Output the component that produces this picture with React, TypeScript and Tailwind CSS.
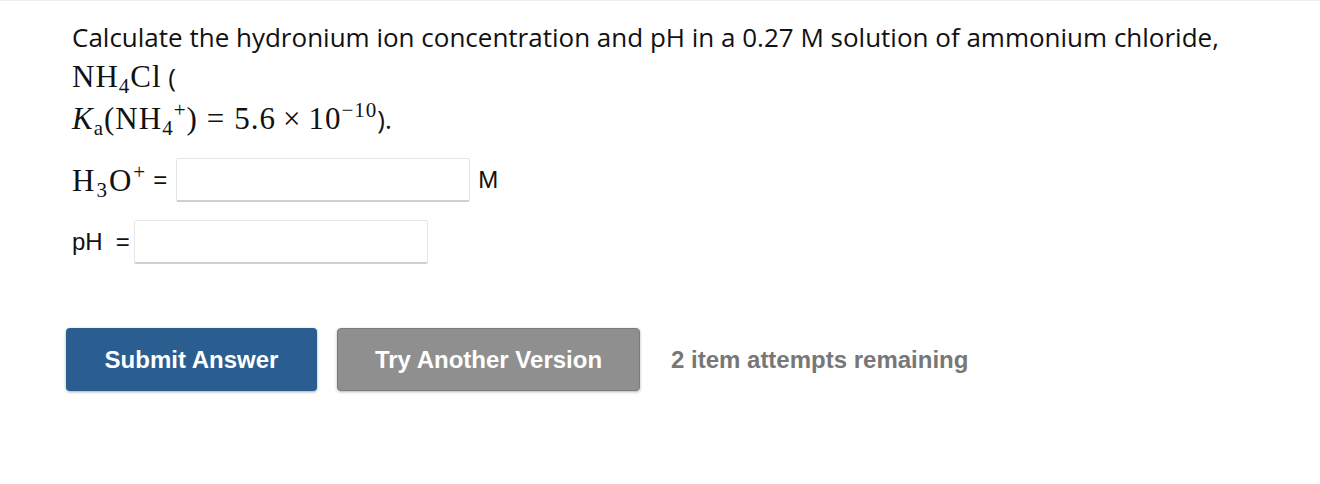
const sans = "font-['Open_Sans',sans-serif]";
const math = "font-['Liberation_Serif',serif] text-[31px] leading-none tracking-[1px]";
const arial = "font-['Liberation_Sans',Arial,sans-serif]";

const Sub = ({ children }: { children: React.ReactNode }) => (
  <span className="relative top-[6px] text-[21px] leading-none">{children}</span>
);

const Sup = ({ children }: { children: React.ReactNode }) => (
  <span className="relative -top-[12px] text-[21px] leading-none">{children}</span>
);

const AnswerInput = () => (
  <input
    type="text"
    className="h-[44px] w-[294px] rounded-[2px] border border-[#e6e6e6] border-b-2 border-b-[#cfcfcf] bg-white px-2 text-[20px] outline-none"
  />
);

export default function App() {
  return (
    <div className="min-h-[484px] w-full border-t border-[#ececec] bg-white pl-[72px] pt-[16px] text-[#111]">
      <div className={`${sans} h-[40px] text-[26px] leading-[40px]`}>
        Calculate the hydronium ion concentration and pH in a 0.27 M solution of ammonium chloride,
      </div>
      <div className={`${sans} h-[40px] text-[26px] leading-[40px]`}>
        <span className={math}>
          NH<Sub>4</Sub>Cl
        </span>{" "}
        (
      </div>
      <div className={`${sans} mt-[2px] h-[40px] text-[26px] leading-[40px]`}>
        <span className={math}>
          <i>K</i>
          <Sub>a</Sub>
          (NH<Sub>4</Sub>
          <Sup>+</Sup>)<span className="mx-[9px]">=</span>5.6<span className="mx-[7px]">×</span>10
          <Sup>−10</Sup>
        </span>
        ).
      </div>

      <div className="mt-[19px] flex h-[44px] items-center">
        <span className={`${math} tracking-[2px]`}>
          H<Sub>3</Sub>O<Sup>+</Sup>
        </span>
        <span className={`${arial} ml-[6px] text-[24px]`}>=</span>
        <div className="ml-[9px]">
          <AnswerInput />
        </div>
        <span className={`${arial} ml-[8px] text-[24px]`}>M</span>
      </div>

      <div className="mt-[18px] flex h-[44px] items-center">
        <span className={`${arial} text-[24px]`}>pH</span>
        <span className={`${arial} ml-[13px] text-[24px]`}>=</span>
        <div className="ml-[4px]">
          <AnswerInput />
        </div>
      </div>

      <div className={`${arial} -ml-[6px] mt-[64px] flex items-center`}>
        <button className="h-[63px] w-[251px] rounded-[4px] bg-[#2a5e91] text-[24px] font-bold text-white shadow-[0_1px_3px_rgba(0,0,0,0.35)]">
          Submit Answer
        </button>
        <button className="ml-[20px] h-[63px] w-[303px] rounded-[4px] border border-[#7b7b7b] bg-[#8f8f8f] text-[24px] font-bold text-white shadow-[0_1px_3px_rgba(0,0,0,0.3)]">
          Try Another Version
        </button>
        <span className="ml-[31px] text-[24px] font-bold text-[#777]">2 item attempts remaining</span>
      </div>
    </div>
  );
}
